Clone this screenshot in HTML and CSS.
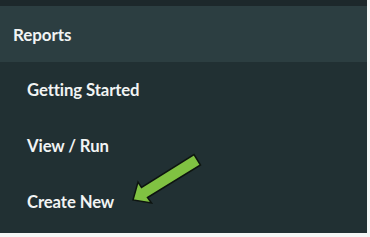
FILE: index.html
```html
<!DOCTYPE html>
<html>
<head>
<meta charset="utf-8">
<link rel="stylesheet" href="styles.css">
</head>
<body>
<nav class="sidebar">
  <div class="topbar"></div>
  <div class="section-head">Reports</div>
  <ul class="submenu">
    <li class="item">Getting Started</li>
    <li class="item">View / Run</li>
    <li class="item">Create New</li>
  </ul>
  <svg class="arrow" width="370" height="237" viewBox="0 0 370 237">
    <polygon points="133,200 138,182 141.5,187.5 194,154.5 200.5,165 147.5,197.5 151.5,203" fill="#80c242" stroke="#0d1410" stroke-width="1.5" stroke-linejoin="miter"/>
  </svg>
</nav>
</body>
</html>
```
FILE: styles.css
```css
html, body {
  margin: 0;
  padding: 0;
  background: #f4f6f6;
}
.sidebar {
  position: relative;
  width: 367px;
  height: 233px;
  background: #213033;
  font-family: Lato, "Open Sans", sans-serif;
  font-weight: 700;
  color: #f2f4f4;
  letter-spacing: -0.1px;
}
.topbar {
  height: 6px;
  background: #1d282b;
}
.section-head {
  height: 56px;
  display: flex;
  align-items: center;
  padding-left: 13px;
  background: #2c3e41;
  font-size: 17px;
}
.submenu {
  list-style: none;
  margin: 0;
  padding: 0;
}
.item {
  height: 56px;
  display: flex;
  align-items: center;
  padding-left: 27px;
  font-size: 16.7px;
}
.arrow {
  position: absolute;
  left: 0;
  top: 0;
  pointer-events: none;
}
```
